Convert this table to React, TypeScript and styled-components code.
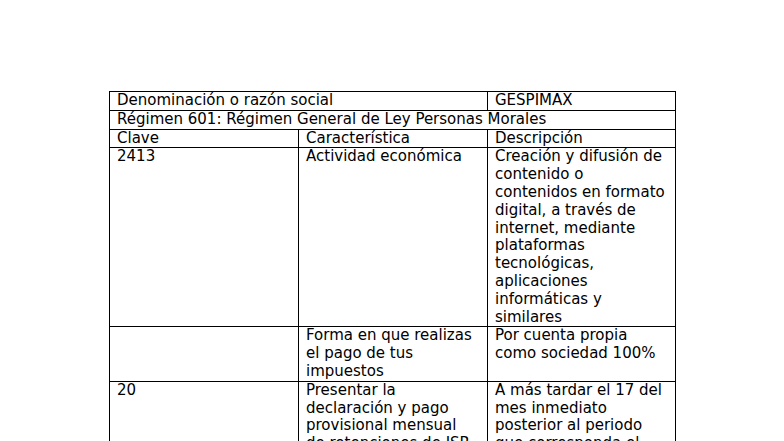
import React from "react";
import styled, { createGlobalStyle } from "styled-components";

const Global = createGlobalStyle`
  html, body { margin: 0; padding: 0; background: #ffffff; }
  body { font-family: "DejaVu Sans", "Liberation Sans", sans-serif; color: #000; }
`;

const Page = styled.div`
  padding: 91px 0 40px 109px;
`;

const Table = styled.table`
  border-collapse: collapse;
  table-layout: fixed;
  width: 566px;
  font-size: 15px;
  line-height: 17.8px;
`;

const Col = styled.col<{ $w: number }>`
  width: ${(p) => p.$w}px;
`;

const Cell = styled.td`
  border: 1px solid #000;
  padding: 0 8px 0 7px;
  vertical-align: top;
  text-align: left;
  overflow-wrap: break-word;
`;

type Row = { cells: { text: string; span?: number }[] };

const rows: Row[] = [
  { cells: [{ text: "Denominación o razón social", span: 2 }, { text: "GESPIMAX" }] },
  { cells: [{ text: "Régimen 601: Régimen General de Ley Personas Morales", span: 3 }] },
  { cells: [{ text: "Clave" }, { text: "Característica" }, { text: "Descripción" }] },
  {
    cells: [
      { text: "2413" },
      { text: "Actividad económica" },
      {
        text:
          "Creación y difusión de contenido o contenidos en formato digital, a través de internet, mediante plataformas tecnológicas, aplicaciones informáticas y similares",
      },
    ],
  },
  {
    cells: [
      { text: "" },
      { text: "Forma en que realizas el pago de tus impuestos" },
      { text: "Por cuenta propia como sociedad 100%" },
    ],
  },
  {
    cells: [
      { text: "20" },
      {
        text:
          "Presentar la declaración y pago provisional mensual de retenciones de ISR por sueldos y salarios",
      },
      {
        text:
          "A más tardar el 17 del mes inmediato posterior al periodo que corresponda el pago",
      },
    ],
  },
];

export default function App() {
  return (
    <>
      <Global />
      <Page>
        <Table>
          <colgroup>
            <Col $w={189} />
            <Col $w={189} />
            <Col $w={188} />
          </colgroup>
          <tbody>
            {rows.map((r, i) => (
              <tr key={i}>
                {r.cells.map((c, j) => (
                  <Cell key={j} colSpan={c.span}>
                    {c.text || "\u00a0"}
                  </Cell>
                ))}
              </tr>
            ))}
          </tbody>
        </Table>
      </Page>
    </>
  );
}
